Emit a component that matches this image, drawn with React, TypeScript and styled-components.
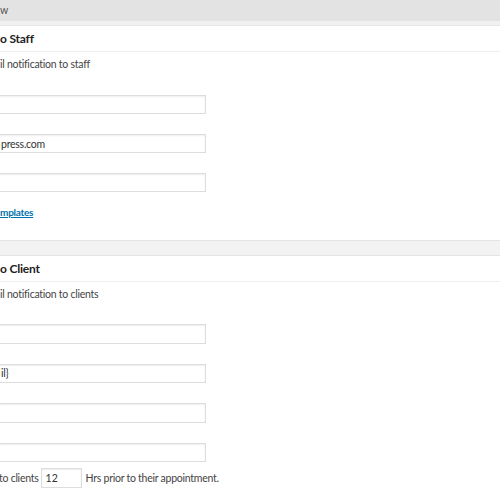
import styled, { createGlobalStyle } from "styled-components";

const GlobalStyle = createGlobalStyle`
  html, body {
    margin: 0;
    padding: 0;
    background: #ffffff;
    overflow: hidden;
  }
  body {
    font-family: Lato, "Open Sans", "Liberation Sans", sans-serif;
    font-size: 10.5px;
    letter-spacing: -0.25px;
    color: #444444;
  }
`;

const Page = styled.div`
  width: 500px;
  height: 500px;
  overflow: hidden;
  background: #ffffff;
`;

const TopBar = styled.div`
  height: 21px;
  line-height: 21px;
  background: #e3e3e3;
  color: #555555;
  font-size: 10.5px;
`;

const TabStrip = styled.div`
  height: 4px;
  background: #f1f1f1;
  border-bottom: 1px solid #e6e6e6;
`;

const Band = styled.div`
  height: 14px;
  background: #f2f2f2;
  border-top: 1px solid #e4e4e4;
  border-bottom: 1px solid #e4e4e4;
`;

const PanelHeader = styled.h3`
  margin: 0;
  height: 25px;
  line-height: 25px;
  font-size: 12px;
  font-weight: 700;
  letter-spacing: -0.2px;
  color: #222222;
  border-bottom: 1px solid #eeeeee;
`;

const PanelBody = styled.div`
  display: flex;
  flex-direction: column;
  align-items: flex-start;
  padding-top: 4px;
`;

const Desc = styled.p`
  margin: 0;
  height: 16px;
  line-height: 16px;
`;

const Fields = styled.div<{ $top: number; $gap: number }>`
  display: flex;
  flex-direction: column;
  gap: ${(p) => p.$gap}px;
  margin-top: ${(p) => p.$top}px;
`;

const TextInput = styled.input<{ $h: number }>`
  display: block;
  box-sizing: border-box;
  margin: 0 0 0 -2px;
  width: 208px;
  height: ${(p) => p.$h}px;
  padding: 0 0 0 2px;
  border: 1px solid #dddddd;
  box-shadow: inset 0 1px 2px rgba(0, 0, 0, 0.07);
  background: #ffffff;
  font-family: Lato, "Open Sans", "Liberation Sans", sans-serif;
  font-size: 10.5px;
  letter-spacing: -0.25px;
  color: #333333;
  outline: none;
`;

const TemplatesLink = styled.a`
  display: block;
  margin: 12px 0 20px;
  height: 16px;
  line-height: 16px;
  font-size: 10px;
  font-weight: 700;
  color: #0073aa;
  text-decoration: underline;
`;

const ReminderRow = styled.div`
  display: flex;
  align-items: center;
  gap: 2px;
  margin-top: 6px;
  margin-left: -1px;
`;

const HoursInput = styled.input`
  box-sizing: border-box;
  width: 41px;
  height: 20px;
  margin: 0 2px 0 0;
  padding: 0 0 0 4px;
  border: 1px solid #dddddd;
  box-shadow: inset 0 1px 2px rgba(0, 0, 0, 0.07);
  font-family: Lato, "Open Sans", "Liberation Sans", sans-serif;
  font-size: 10.5px;
  color: #333333;
  outline: none;
`;

const Gap = styled.div<{ $h: number }>`
  height: ${(p) => p.$h}px;
`;

function App() {
  return (
    <Page>
      <GlobalStyle />
      <TopBar>w</TopBar>
      <TabStrip />

      <PanelHeader>o Staff</PanelHeader>
      <PanelBody>
        <Desc>il notification to staff</Desc>
        <Fields $top={23} $gap={20}>
          <TextInput $h={19} readOnly value="" />
          <TextInput $h={19} readOnly value="press.com" />
          <TextInput $h={19} readOnly value="" />
        </Fields>
        <TemplatesLink href="#">mplates</TemplatesLink>
      </PanelBody>

      <Band />

      <PanelHeader>o Client</PanelHeader>
      <PanelBody>
        <Desc>il notification to clients</Desc>
        <Fields $top={22} $gap={20}>
          <TextInput $h={19.5} readOnly value="" />
          <TextInput $h={19.5} readOnly value="il}" />
          <TextInput $h={19.5} readOnly value="" />
          <TextInput $h={19.5} readOnly value="" />
        </Fields>
        <ReminderRow>
          <span>to clients</span>
          <HoursInput readOnly value="12" />
          <span>Hrs prior to their appointment.</span>
        </ReminderRow>
      </PanelBody>
      <Gap $h={20} />
    </Page>
  );
}

export default App;
